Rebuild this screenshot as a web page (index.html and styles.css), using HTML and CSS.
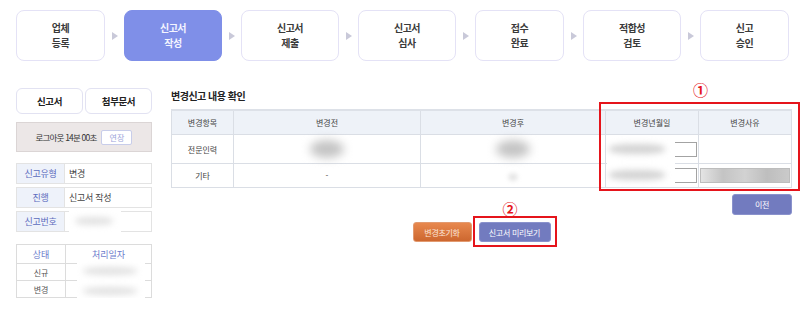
FILE: index.html
```html
<!DOCTYPE html>
<html lang="ko">

<head>
  <meta charset="utf-8">
  <meta name="viewport" content="width=device-width">
  <title>변경신고 내용 확인</title>
  <link rel="stylesheet" href="styles.css">
</head>
<body>
  <ol class="steps">
    <li class="step">업체<br>등록</li>
    <li class="arrow"></li>
    <li class="step wide on">신고서<br>작성</li>
    <li class="arrow"></li>
    <li class="step wide">신고서<br>제출</li>
    <li class="arrow"></li>
    <li class="step wide">신고서<br>심사</li>
    <li class="arrow"></li>
    <li class="step">접수<br>완료</li>
    <li class="arrow"></li>
    <li class="step wide">적합성<br>검토</li>
    <li class="arrow"></li>
    <li class="step">신고<br>승인</li>
  </ol>

  <div class="content">
    <aside class="side">
      <div class="tabs">
        <a class="tab">신고서</a>
        <a class="tab">첨부문서</a>
      </div>
      <div class="logout">로그아웃 14분 00초 <button class="extend">연장</button></div>

      <dl class="info">
        <div class="info-row"><dt>신고유형</dt><dd>변경</dd></div>
        <div class="info-row"><dt>진행</dt><dd>신고서 작성</dd></div>
        <div class="info-row"><dt>신고번호</dt><dd></dd><span class="cover cover-no"></span></div>
      </dl>

      <div class="status-wrap">
        <table class="status">
          <tr><th class="c-state">상태</th><th>처리일자</th></tr>
          <tr><td>신규</td><td></td></tr>
          <tr><td>변경</td><td></td></tr>
        </table>
        <span class="cover cover-dates"></span>
      </div>
    </aside>

    <main class="main">
      <h2 class="title">변경신고 내용 확인</h2>
      <div class="table-wrap">
        <table class="changes">
          <colgroup>
            <col class="w-item"><col class="w-before"><col class="w-after"><col class="w-date"><col class="w-reason">
          </colgroup>
          <tr><th>변경항목</th><th>변경전</th><th>변경후</th><th>변경년월일</th><th>변경사유</th></tr>
          <tr class="r1">
            <td>전문인력</td>
            <td><span class="smudge"></span></td>
            <td><span class="smudge"></span></td>
            <td class="left"><span class="field"></span></td>
            <td></td>
          </tr>
          <tr class="r2">
            <td>기타</td>
            <td>-</td>
            <td><span class="smudge small"></span></td>
            <td class="left"><span class="field"></span></td>
            <td class="left"><span class="field filled"></span></td>
          </tr>
        </table>
        <span class="cover cover-date"></span>
        <div class="mark mark1"><span class="num">①</span></div>
      </div>

      <div class="prev-row"><button class="btn blue prev">이전</button></div>

      <div class="actions">
        <button class="btn orange reset">변경초기화</button>
        <span class="marked">
          <button class="btn blue preview">신고서 미리보기</button>
          <span class="mark mark2"><span class="num">②</span></span>
        </span>
      </div>
    </main>
  </div>
</body>
</html>
```

FILE: styles.css
```css
body { margin: 0; background: #fff; color: #333; font-family: "Noto Sans CJK KR", "Noto Sans", sans-serif; font-size: 9px; }
ol, dl, dd { margin: 0; padding: 0; list-style: none; }
button { font-family: inherit; cursor: pointer; }

/* progress steps */
.steps { display: flex; align-items: center; padding: 10px 0 0 16px; }
.step { width: 89px; height: 51px; box-sizing: border-box; border: 1px solid #e4e2f6; border-radius: 8px; display: flex; align-items: center; justify-content: center; text-align: center; font-size: 10px; font-weight: 700; line-height: 14.5px; letter-spacing: -0.5px; color: #3a3a3a; }
.step.wide { width: 98px; }
.step.on { background: #7f8fe8; border-color: #7f8fe8; color: #f4f5ff; }
.arrow { width: 19px; display: flex; justify-content: center; }
.arrow::before { content: ""; border-left: 6px solid #c9c9d9; border-top: 4px solid transparent; border-bottom: 4px solid transparent; }

.content { display: flex; gap: 19px; padding: 27px 0 0 16px; }

/* left column */
.side { width: 136px; }
.tabs { display: flex; gap: 2px; }
.tab { flex: 1; height: 26px; box-sizing: border-box; border: 1px solid #e2e2f2; border-radius: 6px; display: flex; align-items: center; justify-content: center; font-size: 9.5px; font-weight: 700; letter-spacing: -0.4px; color: #222; }
.logout { margin-top: 8px; height: 30px; box-sizing: border-box; background: #ece7e7; border: 1px solid #dbd5d5; display: flex; align-items: center; justify-content: center; gap: 5px; font-size: 8.5px; letter-spacing: -0.8px; color: #333; }
.extend { width: 31px; height: 15px; padding: 0; border: 1px solid #c8cdea; border-radius: 2px; background: #fff; color: #9ba4da; font-size: 8px; letter-spacing: 0; }

.info { margin-top: 11px; display: flex; flex-direction: column; gap: 3px; }
.info-row { position: relative; display: flex; height: 21px; box-sizing: border-box; border: 1px solid #e3e3e3; }
.info dt { width: 47px; background: #eef2fa; color: #5b6bbd; border-right: 1px solid #e3e3e3; display: flex; align-items: center; justify-content: center; font-size: 9px; letter-spacing: -0.3px; }
.info dd { padding-left: 4px; display: flex; align-items: center; font-size: 9px; letter-spacing: -0.3px; color: #444; }

.status-wrap { position: relative; margin-top: 12px; }
.status { width: 100%; border-collapse: collapse; }
.status th, .status td { border: 1px solid #dcdcdc; padding: 0; text-align: center; }
.status th { height: 18px; font-weight: 400; color: #6b7bcc; font-size: 9px; }
.status td { height: 16px; font-size: 8px; color: #555; }
.status .c-state { width: 48px; }

/* blurred personal data */
.cover { position: absolute; background: #fff; }
.cover::before, .cover::after { content: ""; position: absolute; left: 6px; right: 8px; height: 8px; border-radius: 40%; background: #e2e2e2; filter: blur(3px); }
.cover::before { top: 5px; }
.cover::after { bottom: 5px; }
.cover-no { left: 52px; top: -1px; width: 52px; height: 21px; }
.cover-no::after { display: none; }
.cover-no::before { top: 6px; }
.cover-dates { left: 61px; top: 18px; width: 68px; height: 38px; }
.cover-date { left: 436px; top: 31px; width: 68px; height: 43px; }
.cover-date::before, .cover-date::after { left: 2px; right: 10px; height: 10px; background: #d4d4d4; }
.cover-date::before { top: 4px; }
.cover-date::after { bottom: 3px; }

/* main column */
.main { width: 621px; }
.title { margin: 0 0 5px; font-size: 10px; line-height: 16px; font-weight: 700; letter-spacing: -0.5px; color: #222; }
.table-wrap { position: relative; }
.changes { width: 100%; border-collapse: collapse; table-layout: fixed; border-top: 2px solid #dde1e8; }
.changes th, .changes td { border: 1px solid #dadee5; padding: 0; text-align: center; font-size: 8px; font-weight: 400; color: #444; }
.changes th { height: 23px; background: #eef2f8; }
.changes .r1 td { height: 28px; }
.changes .r2 td { height: 23px; }
.changes td.left { text-align: left; padding-left: 1px; }
.w-item { width: 62px; }
.w-before { width: 187px; }
.w-after { width: 185px; }
.w-date { width: 93px; }

.field { display: inline-block; vertical-align: middle; width: 90px; height: 15px; box-sizing: border-box; border: 1px solid #a3a3a3; background: #fff; }
.field.filled { border-color: #bdbdbd; background: linear-gradient(90deg, #e4e4e4, #c4c4c4 25%, #d2d2d2 50%, #bebebe 75%, #cacaca); }
.smudge { display: inline-block; vertical-align: middle; width: 34px; height: 18px; border-radius: 50%; background: #c4c4c4; filter: blur(5px); }
.smudge.small { width: 10px; height: 8px; background: #e6e6e6; filter: blur(2px); }

.prev-row { display: flex; justify-content: flex-end; margin-top: 6px; }
.actions { display: flex; justify-content: center; gap: 7px; margin-top: 7px; }
.btn { height: 20px; padding: 0; border: 1px solid transparent; border-radius: 3px; color: #fff; font-size: 8px; letter-spacing: -0.3px; }
.btn.blue { background: #727bbf; border-color: #8a92cc; }
.btn.orange { background: linear-gradient(#e8884e, #cd672f); border-color: #e29a70; color: #fbe6da; }
.prev { width: 60px; height: 21px; }
.reset { width: 59px; }
.preview { width: 72px; }

/* red annotations */
.marked { position: relative; display: flex; }
.mark { position: absolute; border: 2px solid #e5141b; }
.mark .num { position: absolute; font-size: 15px; line-height: 16px; font-weight: 700; color: #e5141b; }
.mark1 { left: 428px; top: -7px; width: 201px; height: 89px; box-sizing: border-box; }
.mark1 .num { left: 92px; top: -22px; }
.mark2 { left: -6px; right: -6px; top: -6px; bottom: -5px; }
.mark2 .num { left: 28px; top: -17px; }
```
